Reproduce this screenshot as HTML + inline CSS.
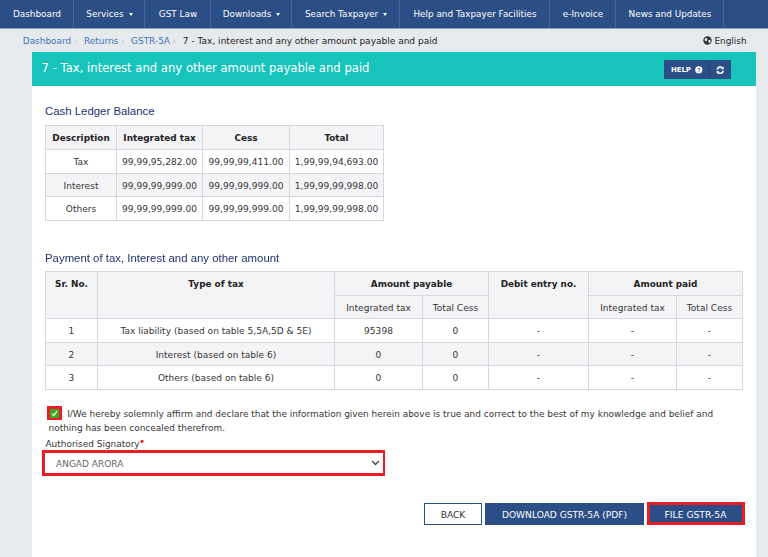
<!DOCTYPE html>
<html><head><meta charset="utf-8">
<style>
*{box-sizing:border-box;margin:0;padding:0}
html,body{width:768px;height:557px;overflow:hidden}
body{background:#e7eaed;font-family:"DejaVu Sans","Liberation Sans",sans-serif;font-size:8.95px;letter-spacing:0;color:#363636;position:relative}
.nav{position:absolute;left:0;top:0;width:768px;height:28px;background:#2c4e86;display:flex}
.navsub{position:absolute;left:0;top:28px;width:768px;height:1px;background:#8a9dbb}
.nav div{height:28px;line-height:28.6px;color:#fff;font-size:8.85px;letter-spacing:0;padding-left:1px;text-align:center;border-right:1px solid #45639a;white-space:nowrap}
.car{display:inline-block;width:0;height:0;border-left:2.5px solid transparent;border-right:2.5px solid transparent;border-top:3px solid #fff;vertical-align:middle;margin-left:5px}
.bc{position:absolute;left:22.8px;top:34px;font-size:9.02px;letter-spacing:0;white-space:nowrap;line-height:14px;color:#222}
.bc a{color:#3b73b9;text-decoration:none;font-size:8.92px}
.bc i{color:#c4c8cc;font-style:normal;display:inline-block;width:12.9px;text-align:left;padding-left:2.5px;font-size:9px;letter-spacing:0}
.lang{position:absolute;left:703px;top:34px;font-size:8.9px;letter-spacing:0;line-height:14px;color:#222;white-space:nowrap}
.panel{position:absolute;left:32px;top:52px;width:724px;height:505px;background:#fff}
.hd{position:absolute;left:0;top:0;width:724px;height:34px;background:#17c4bb;color:#fff;font-size:11.62px;letter-spacing:0;line-height:32px;padding-left:9.6px;white-space:nowrap}
.help{position:absolute;left:632px;top:8px;width:67px;height:19px;background:#2c4e86;color:#fff;font-size:7px;letter-spacing:-0.1px;font-weight:bold;line-height:19px}
.help b{position:absolute;left:7px;top:1px}
.help .dv{position:absolute;left:45px;top:0;width:1px;height:19px;background:#254378}
h4{letter-spacing:0;position:absolute;font-family:"Liberation Sans",sans-serif;font-weight:normal;font-size:11.4px;color:#223270;left:45px;white-space:nowrap;line-height:14px}
table{position:absolute;border-collapse:collapse;font-size:9.05px;color:#363636}
td,th{border:1px solid #d5d7de;text-align:center;vertical-align:middle;white-space:nowrap;padding:1px 0 0 0}
th{background:#f4f4f7;font-weight:bold;font-size:8.88px;letter-spacing:0;color:#222}
tr.alt td,td.g{background:#f4f4f7;padding-top:1px}
.decl{position:absolute;left:48.5px;top:406.6px;width:700px;line-height:14.25px;font-size:8.95px;color:#363636}
.cb{position:absolute;left:47px;top:406px;width:15px;height:14px;background:#ed1c24}
.cb span{position:absolute;left:3px;top:3px;width:9px;height:9px;background:#3aa81e}
.lbl{position:absolute;left:45.5px;top:437px;line-height:14px;font-size:8.95px;color:#363636}
.sel{position:absolute;left:42px;top:450px;width:343.4px;height:26px;border:3px solid #ed1c24;border-right-width:2.6px;background:#fff;color:#666;line-height:22px;padding-left:11px;font-size:9px}
.btn{position:absolute;top:503px;height:22px;line-height:24px;text-align:center;font-size:9.1px;white-space:nowrap}
</style></head><body>
<div class="nav">
<div style="width:74px">Dashboard</div>
<div style="width:71px">Services<span class="car"></span></div>
<div style="width:66px">GST Law</div>
<div style="width:81px">Downloads<span class="car"></span></div>
<div style="width:108px">Search Taxpayer<span class="car"></span></div>
<div style="width:150px">Help and Taxpayer Facilities</div>
<div style="width:66px">e-Invoice</div>
<div style="width:108px">News and Updates</div>
</div>
<div class="navsub"></div>
<div class="bc"><a>Dashboard</a><i>›</i><a>Returns</a><i>›</i><a>GSTR-5A</a><i>›</i>7 - Tax, interest and any other amount payable and paid</div>
<div class="lang"><svg width="9" height="9" viewBox="0 0 10 10" style="vertical-align:-1px;margin-right:2.5px"><circle cx="5" cy="5" r="4.7" fill="#333"/><path d="M1.8 3.2 L3.6 2 L5 3 L4.4 5 L3 6.2 L2 5Z M6 4.6 L8.2 4.2 L8.4 6.6 L6.8 8.2 L6 6.4Z" fill="#e7eaed"/></svg>English</div>
<div class="panel">
<div class="hd">7 - Tax, interest and any other amount payable and paid
<div class="help"><b>HELP</b>
<svg style="position:absolute;left:31.3px;top:6.2px" width="7.6" height="7.6" viewBox="0 0 8 8"><circle cx="4" cy="4" r="3.8" fill="#fff"/><text x="4" y="6.3" font-size="6" font-weight="bold" text-anchor="middle" fill="#2c4e86" font-family="Liberation Sans, sans-serif">?</text></svg>
<span class="dv"></span>
<svg style="position:absolute;left:51.6px;top:5.6px" width="8.4" height="8.4" viewBox="0 0 9 9"><path d="M1.3 4 A3.2 3.2 0 0 1 7 2.3 M7.7 5 A3.2 3.2 0 0 1 2 6.7" fill="none" stroke="#fff" stroke-width="1.7"/><path d="M8.3 0.6 L8.3 3.6 L5.3 3.6Z M0.7 8.4 L0.7 5.4 L3.7 5.4Z" fill="#fff"/></svg>
</div></div>
</div>
<h4 style="top:103.5px">Cash Ledger Balance</h4>
<table style="left:45px;top:125px;width:339px">
<tr style="height:24px"><th style="width:71px">Description</th><th style="width:86px">Integrated tax</th><th style="width:87px">Cess</th><th>Total</th></tr>
<tr style="height:24px"><td>Tax</td><td>99,99,95,282.00</td><td>99,99,99,411.00</td><td>1,99,99,94,693.00</td></tr>
<tr class="alt" style="height:23px"><td>Interest</td><td>99,99,99,999.00</td><td>99,99,99,999.00</td><td>1,99,99,99,998.00</td></tr>
<tr style="height:24px"><td>Others</td><td>99,99,99,999.00</td><td>99,99,99,999.00</td><td>1,99,99,99,998.00</td></tr>
</table>
<h4 style="top:251px;transform:translateY(-0.5px);will-change:transform">Payment of tax, Interest and any other amount</h4>
<table style="left:45px;top:271px;width:698px">
<tr style="height:24px"><th rowspan="2" style="width:52px;vertical-align:top;padding-top:7px">Sr. No.</th><th rowspan="2" style="width:237px;vertical-align:top;padding-top:7px">Type of tax</th><th colspan="2">Amount payable</th><th rowspan="2" style="width:100px;vertical-align:top;padding-top:7px">Debit entry no.</th><th colspan="2">Amount paid</th></tr>
<tr style="height:23px"><td class="g" style="width:88px">Integrated tax</td><td class="g" style="width:66px">Total Cess</td><td class="g" style="width:88px">Integrated tax</td><td class="g">Total Cess</td></tr>
<tr style="height:24px"><td>1</td><td>Tax liability (based on table 5,5A,5D &amp; 5E)</td><td>95398</td><td>0</td><td>-</td><td>-</td><td>-</td></tr>
<tr class="alt" style="height:23px"><td>2</td><td>Interest (based on table 6)</td><td>0</td><td>0</td><td>-</td><td>-</td><td>-</td></tr>
<tr style="height:24px"><td>3</td><td>Others (based on table 6)</td><td>0</td><td>0</td><td>-</td><td>-</td><td>-</td></tr>
</table>
<div class="cb"><span><svg width="9" height="9" viewBox="0 0 9 9" style="position:absolute;left:0;top:0"><path d="M2 4.6 L3.8 6.6 L7 2.2" fill="none" stroke="#fff" stroke-width="1.15"/></svg></span></div>
<div class="decl"><span style="display:inline-block;width:18.7px"></span>I/We hereby solemnly affirm and declare that the information given herein above is true and correct to the best of my knowledge and belief and<br>nothing has been concealed therefrom.</div>
<div class="lbl">Authorised Signatory<span style="color:#ed1c24;font-size:11px;position:relative;top:-2.3px;left:-1px;line-height:0">•</span></div>
<div class="sel">ANGAD ARORA<svg style="position:absolute;left:326.1px;top:7.1px" width="9" height="6.3" viewBox="0 0 10 7"><path d="M1.2 1.2 L5 5 L8.8 1.2" fill="none" stroke="#4d4848" stroke-width="1.7"/></svg></div>
<div class="btn" style="left:424px;width:58px;border:1px solid #2c4e86;background:#fff;color:#333;line-height:22px">BACK</div>
<div class="btn" style="left:485px;width:159px;background:#2c4e86;color:#fff">DOWNLOAD GSTR-5A (PDF)</div>
<div class="btn" style="left:647px;top:502px;width:98px;height:23px;background:#2c4e86;color:#fff;border:3px solid #ed1c24;line-height:20.8px;font-size:9.2px;padding-right:1px">FILE GSTR-5A</div>
</body></html>
